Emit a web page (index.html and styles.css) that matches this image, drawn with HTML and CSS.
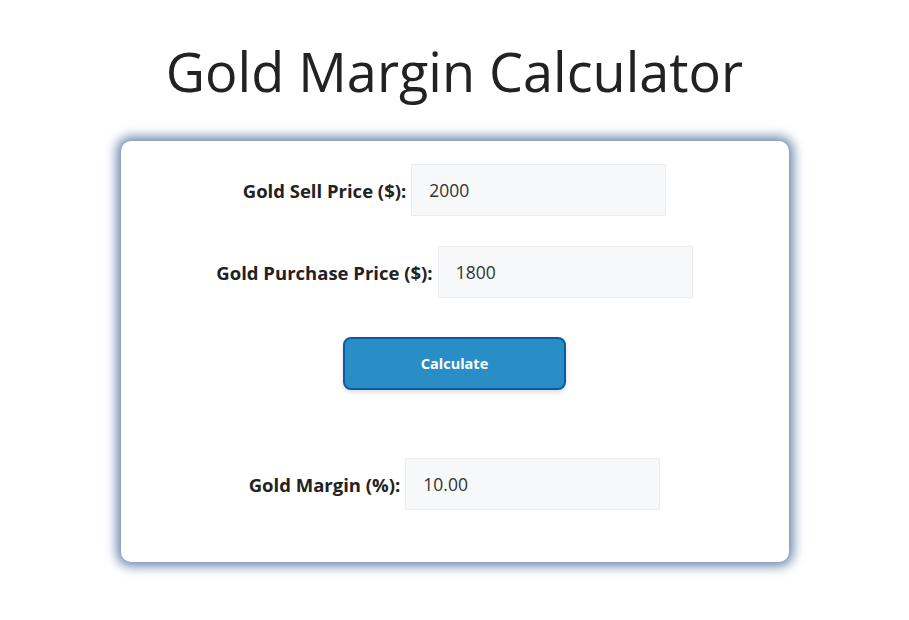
FILE: index.html
```html
<!DOCTYPE html>
<html lang="en">
<head>
  <meta charset="UTF-8" />
  <title>Gold Margin Calculator</title>
  <link rel="stylesheet" href="styles.css">
</head>
<body>
  <h1>Gold Margin Calculator</h1>

  <div class="calculator">
    <div class="row">
      <label for="sellPrice">Gold Sell Price ($):</label>
      <input type="number" id="sellPrice" value="2000">
    </div>
    <div class="row">
      <label for="purchasePrice">Gold Purchase Price ($):</label>
      <input type="number" id="purchasePrice" value="1800">
    </div>
    <div class="row">
      <button onclick="calculateMargin()">Calculate</button>
    </div>
    <div class="row result">
      <label for="margin">Gold Margin (%):</label>
      <input type="text" id="margin" value="10.00" readonly>
    </div>
  </div>

  <script>
    function calculateMargin() {
      const sell = parseFloat(document.getElementById('sellPrice').value);
      const purchase = parseFloat(document.getElementById('purchasePrice').value);
      if (isNaN(sell) || isNaN(purchase) || sell === 0) {
        document.getElementById('margin').value = '';
        return;
      }
      const margin = ((sell - purchase) / sell) * 100;
      document.getElementById('margin').value = margin.toFixed(2);
    }
  </script>
</body>
</html>
```

FILE: styles.css
```css
body {
  font-family: 'Open Sans', 'Noto Sans', sans-serif;
  margin: 0;
  padding: 0 0 40px;
  background-color: #ffffff;
  color: #222;
}
h1 {
  text-align: center;
  font-weight: 400;
  font-size: 54px;
  margin: 36px 0 35px;
  line-height: 1.3;
  color: #222;
}
.calculator {
  width: 668px;
  margin: 0 auto;
  box-sizing: border-box;
  padding: 23px 0 52px;
  background-color: #fff;
  border-radius: 10px;
  box-shadow: 0 0 12px 4px rgba(50, 90, 140, 0.75);
}
.row {
  display: flex;
  justify-content: center;
  align-items: center;
  gap: 5px;
  margin-bottom: 30px;
}
.row:last-child {
  margin-bottom: 0;
}
.result {
  margin-top: 68px;
}
label {
  font-weight: 700;
  font-size: 18.5px;
  color: #222;
}
input {
  width: 255px;
  height: 52px;
  box-sizing: border-box;
  padding: 0 17px;
  font-family: inherit;
  font-size: 17.5px;
  color: #333;
  background-color: #f7f8fa;
  border: 1px solid #ececee;
  outline: none;
}
input::-webkit-outer-spin-button,
input::-webkit-inner-spin-button {
  -webkit-appearance: none;
  margin: 0;
}
button {
  width: 223px;
  height: 53px;
  margin-top: 9px;
  font-family: inherit;
  font-size: 14.5px;
  font-weight: 700;
  color: #fff;
  background-color: #2a8ec6;
  border: 2px solid #0b5aa5;
  border-radius: 8px;
  box-shadow: 0 2px 4px rgba(0, 0, 0, 0.15);
  cursor: pointer;
}
button:hover {
  background-color: #2680b3;
}
```
